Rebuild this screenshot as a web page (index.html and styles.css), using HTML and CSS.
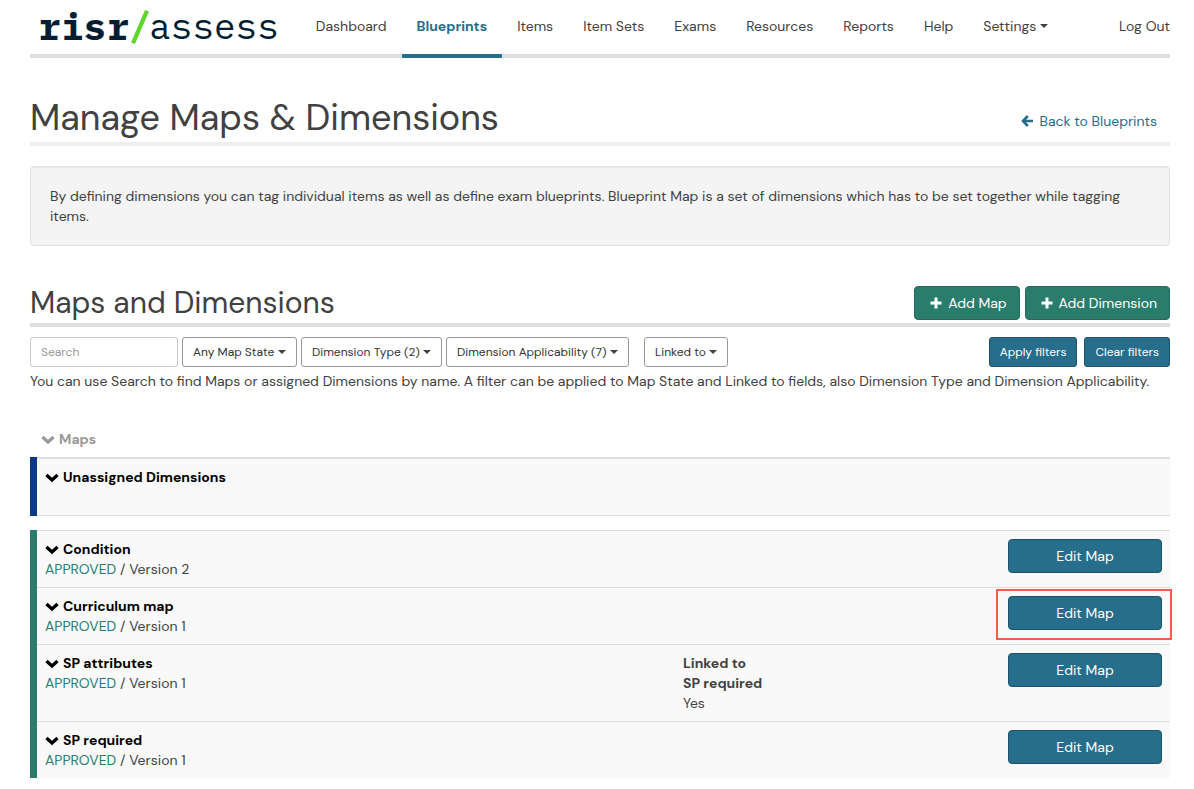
FILE: index.html
```html
<!DOCTYPE html>
<html lang="en">
<head>
<meta charset="utf-8">
<meta name="viewport" content="width=device-width, initial-scale=1">
<title>Manage Maps &amp; Dimensions</title>
<link rel="stylesheet" href="styles.css">
</head>
<body>
<svg class="sprite" aria-hidden="true">
  <symbol id="chevron" viewBox="0 0 14 10"><path d="M1.500 2 L7 7 L12.500 2" fill="none" stroke="currentColor" stroke-width="3.200"/></symbol>
  <symbol id="caret" viewBox="0 0 8 4"><path d="M0 0H8L4 4Z" fill="currentColor"/></symbol>
  <symbol id="plus" viewBox="0 0 12 12"><path d="M6 .5V11.500M.5 6H11.500" stroke="currentColor" stroke-width="3"/></symbol>
  <symbol id="arrow" viewBox="0 0 12 12"><path d="M6.800 1 L2 6 L6.800 11 M2 6H12" fill="none" stroke="currentColor" stroke-width="2.600"/></symbol>
</svg>

<header class="topbar">
  <a class="logo" href="#"><span class="logo-risr">risr</span><svg class="logo-slash" viewBox="0 0 18 34" aria-hidden="true"><path d="M14 0 L18 1.500 L4 34 L0 32.500Z" fill="#5fd62e"/></svg><span class="logo-assess">assess</span></a>
  <nav class="nav" aria-label="Main">
    <a class="nav-link" href="#">Dashboard</a>
    <a class="nav-link nav-link-active" href="#" aria-current="page">Blueprints</a>
    <a class="nav-link" href="#">Items</a>
    <a class="nav-link" href="#">Item Sets</a>
    <a class="nav-link" href="#">Exams</a>
    <a class="nav-link" href="#">Resources</a>
    <a class="nav-link" href="#">Reports</a>
    <a class="nav-link" href="#">Help</a>
    <button class="nav-link" type="button" aria-haspopup="true">Settings<svg class="caret"><use href="#caret"/></svg></button>
  </nav>
  <a class="logout" href="#">Log Out</a>
</header>

<main>
  <div class="page-head">
    <h1>Manage Maps &amp; Dimensions</h1>
    <a class="back" href="#"><svg class="icon"><use href="#arrow"/></svg>Back to Blueprints</a>
  </div>

  <p class="well">By defining dimensions you can tag individual items as well as define exam blueprints. Blueprint Map is a set of dimensions which has to be set together while tagging items.</p>

  <div class="section-head">
    <h2>Maps and Dimensions</h2>
    <div class="actions">
      <button class="btn btn-green" type="button"><svg class="icon"><use href="#plus"/></svg>Add Map</button>
      <button class="btn btn-green" type="button"><svg class="icon"><use href="#plus"/></svg>Add Dimension</button>
    </div>
  </div>

  <form class="filters">
    <input class="search" type="text" placeholder="Search" aria-label="Search">
    <span class="drop"><select aria-label="Map state"><option>Any Map State</option></select><svg class="caret"><use href="#caret"/></svg></span>
    <span class="drop"><select aria-label="Dimension type"><option>Dimension Type (2)</option></select><svg class="caret"><use href="#caret"/></svg></span>
    <span class="drop"><select aria-label="Dimension applicability"><option>Dimension Applicability (7)</option></select><svg class="caret"><use href="#caret"/></svg></span>
    <span class="drop drop-linked"><select aria-label="Linked to"><option>Linked to</option></select><svg class="caret"><use href="#caret"/></svg></span>
    <span class="filter-actions">
      <button class="btn btn-blue btn-small" type="button">Apply filters</button>
      <button class="btn btn-blue btn-small" type="button">Clear filters</button>
    </span>
  </form>
  <p class="hint">You can use Search to find Maps or assigned Dimensions by name. A filter can be applied to Map State and Linked to fields, also Dimension Type and Dimension Applicability.</p>

  <h3 class="list-title"><svg class="chevron"><use href="#chevron"/></svg>Maps</h3>

  <section class="unassigned">
    <h4><svg class="chevron"><use href="#chevron"/></svg>Unassigned Dimensions</h4>
  </section>

  <section class="maps">
    <article class="map">
      <div><h4><svg class="chevron"><use href="#chevron"/></svg>Condition</h4><p><span class="approved">APPROVED</span> / Version 2</p></div>
      <div></div>
      <div class="map-action"><button class="btn btn-blue" type="button">Edit Map</button></div>
    </article>
    <article class="map">
      <div><h4><svg class="chevron"><use href="#chevron"/></svg>Curriculum map</h4><p><span class="approved">APPROVED</span> / Version 1</p></div>
      <div></div>
      <div class="map-action map-action-marked"><button class="btn btn-blue" type="button">Edit Map</button></div>
    </article>
    <article class="map">
      <div><h4><svg class="chevron"><use href="#chevron"/></svg>SP attributes</h4><p><span class="approved">APPROVED</span> / Version 1</p></div>
      <div><p><b>Linked to</b></p><p><b>SP required</b></p><p>Yes</p></div>
      <div class="map-action"><button class="btn btn-blue" type="button">Edit Map</button></div>
    </article>
    <article class="map">
      <div><h4><svg class="chevron"><use href="#chevron"/></svg>SP required</h4><p><span class="approved">APPROVED</span> / Version 1</p></div>
      <div></div>
      <div class="map-action"><button class="btn btn-blue" type="button">Edit Map</button></div>
    </article>
  </section>
</main>
</body>
</html>
```
FILE: styles.css
```css
* { box-sizing: border-box; }

body {
  margin: 0;
  padding: 0 24px 0 30px;
  background: #fff;
  color: #414141;
  font: 14px/20px "DM Sans", Inter, sans-serif;
}

h1, h2, h3, h4, p { margin: 0; }
a { color: inherit; text-decoration: none; }
button, input, select { font: inherit; color: inherit; }
.sprite { position: absolute; width: 0; height: 0; }

/* Top bar */
.topbar {
  display: flex;
  justify-content: space-between;
  height: 58px;
  border-bottom: 4px solid #dfdfdf;
}
.logo {
  display: flex;
  align-items: flex-start;
  padding: 7px 0 0 8px;
  color: #001e32;
  font-size: 38px;
  line-height: 38px;
}
.logo-risr { font-family: "IBM Plex Mono", "Liberation Mono", monospace; font-weight: 700; }
.logo-slash { width: 18px; height: 34px; margin: 3px 0 0 2px; }
.logo-assess { font-family: "IBM Plex Mono", "DejaVu Sans Mono", monospace; font-size: 36px; }
.nav { display: flex; margin: 0 auto 0 22px; height: 58px; }
.nav-link {
  padding: 16px 15px 18px;
  border: 0;
  border-bottom: 4px solid transparent;
  background: none;
  white-space: nowrap;
}
.nav-link-active { color: #266e8c; font-weight: 700; border-color: #266e8c; }
.logout { padding-top: 16px; white-space: nowrap; }
.caret { width: 8px; height: 4px; margin-left: 4px; vertical-align: 3px; }
.icon { width: 12px; height: 12px; flex: none; }

/* Headings */
h1, h2 { font-weight: 400; }
h1 { font-size: 36px; line-height: 48px; }
h2 { font-size: 30px; line-height: 34px; }
.page-head {
  display: flex;
  justify-content: space-between;
  align-items: flex-end;
  padding-top: 36px;
  border-bottom: 4px solid #eee;
}
.back { display: flex; align-items: center; gap: 6px; padding: 0 13px 11px 0; color: #266e8c; }
.well {
  margin: 20px 0 40px;
  padding: 19px;
  border: 1px solid #e2e2e2;
  border-radius: 4px;
  background: #f4f4f4;
  box-shadow: inset 0 1px 1px rgba(0, 0, 0, .05);
}
.section-head {
  display: flex;
  justify-content: space-between;
  align-items: flex-start;
  padding-bottom: 3px;
  border-bottom: 4px solid #dfdfdf;
}
.actions { display: flex; gap: 5px; }

/* Buttons */
.btn {
  display: inline-flex;
  align-items: center;
  justify-content: center;
  gap: 6px;
  height: 34px;
  padding: 0 12px;
  border: 1px solid;
  border-radius: 4px;
  color: #fff;
  white-space: nowrap;
}
.btn .icon { margin-left: 3px; }
.btn-green { background: #2a7d6c; border-color: #246a5c; }
.btn-blue { background: #266e8c; border-color: #1d5369; }
.btn-small { height: 30px; padding: 0 10px; font-size: 12px; border-radius: 3px; }

/* Filters */
.filters { display: flex; gap: 4px; margin-top: 10px; font-size: 12px; }
.search {
  width: 148px;
  height: 30px;
  padding: 5px 10px;
  border: 1px solid #ccc;
  border-radius: 3px;
}
.search::placeholder { color: #999; }
.drop { display: inline-grid; align-items: center; }
.drop > * { grid-area: 1 / 1; }
.drop select {
  height: 30px;
  padding: 0 21px 0 10px;
  border: 1px solid #999;
  border-radius: 3px;
  background: #fff;
  color: #333;
  appearance: none;
}
.drop .caret { justify-self: end; margin-right: 11px; pointer-events: none; }
.drop-linked { margin-left: 11px; }
.filter-actions { display: flex; gap: 7px; margin-left: auto; }
.hint { margin-top: 4px; }

/* Maps list */
.chevron { width: 14px; height: 10px; margin-right: 4px; vertical-align: -1px; }
.list-title { margin-top: 38px; padding: 0 11px 8px; color: #999; font-size: 14px; line-height: 20px; }
h4 { color: #000; font-size: 14px; line-height: 20px; }
.unassigned {
  min-height: 59px;
  margin-left: 7px;
  padding: 8px;
  border-top: 2px solid #ddd;
  border-bottom: 1px solid #ddd;
  background: #f9f9f9;
  box-shadow: -7px 0 #0a3a87;
}
.maps { margin: 14px 0 0 7px; box-shadow: -7px 0 #2a7d6c; }
.map {
  display: grid;
  grid-template-columns: minmax(0, 1fr) 317px 162px;
  padding: 8px;
  border-top: 1px solid #ddd;
  background: #f9f9f9;
}
.approved { color: #2a7d6c; }
.map-action { position: relative; height: 34px; padding-left: 8px; }
.map-action .btn { width: 100%; }
.map-action-marked::after {
  content: "";
  position: absolute;
  inset: -7px -10px -10px -4px;
  border: 2px solid #fb5b4c;
  pointer-events: none;
}
```
